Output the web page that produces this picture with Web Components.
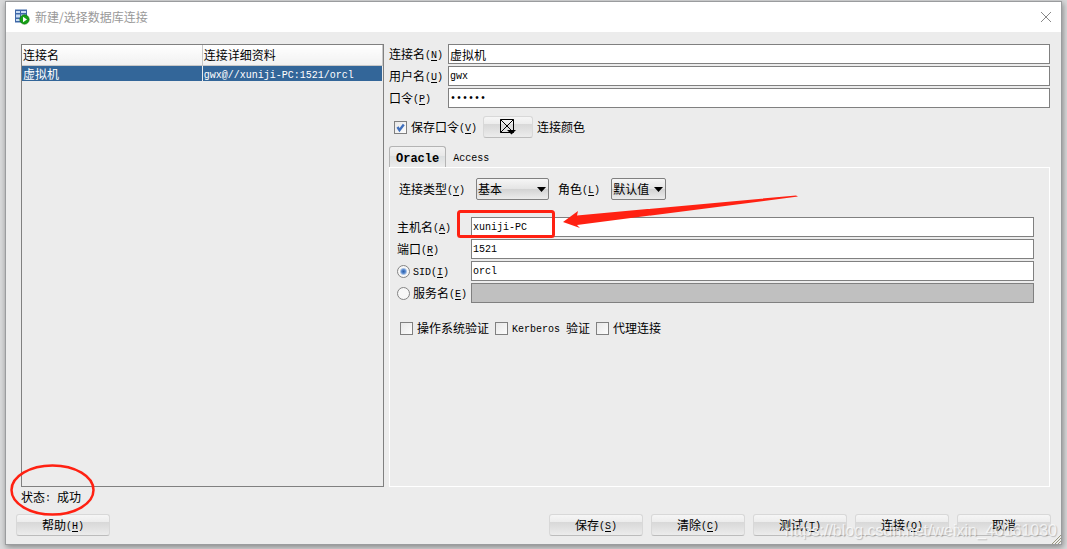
<!DOCTYPE html>
<html lang="zh-CN">
<head>
<meta charset="UTF-8">
<meta name="viewport" content="width=device-width, initial-scale=1">
<title>新建/选择数据库连接</title>
<style>
    body {
        margin: 0;
        background: #d9dadb;
        font-family: "Noto Sans CJK SC", "Liberation Sans", sans-serif;
        font-size: 12px;
        line-height: 16px;
        color: #000;
    }
</style>
</head>
<body>
<db-dialog></db-dialog>

<script>
const MONO = '"Liberation Mono", "Noto Sans CJK SC", monospace';

// Narrow text that sits between the Chinese characters
class LatinText extends HTMLElement {
    constructor() {
        super();
        this.attachShadow({ mode: 'open' });
        this.shadowRoot.innerHTML = `<style>
                :host { font-family: ${MONO}; font-size: 10px; line-height: 1; vertical-align: 1px; }
            </style><slot></slot>`;
    }
}

// Mnemonic such as (N), with the key underlined
class KeyHint extends HTMLElement {
    constructor() {
        super();
        this.attachShadow({ mode: 'open' });
    }

    connectedCallback() {
        this.shadowRoot.innerHTML = `<style>
                :host { font-family: ${MONO}; font-size: 10px; line-height: 1; vertical-align: 1px; }
                u { text-underline-offset: 2px; }
            </style>(<u>${this.getAttribute('key')}</u>)`;
    }
}

class TextField extends HTMLElement {
    constructor() {
        super();
        this.attachShadow({ mode: 'open' });
    }

    connectedCallback() {
        const type = this.getAttribute('type') || 'text';
        const value = this.getAttribute('value') || '';
        const radio = this.hasAttribute('radio');
        const disabled = this.hasAttribute('disabled');
        const checked = this.hasAttribute('checked');

        this.shadowRoot.innerHTML = `
            <style>
                :host { display: flex; align-items: center; }
                label {
                    display: flex;
                    align-items: center;
                    gap: 3px;
                    flex: none;
                    width: var(--label-width, 59px);
                    white-space: nowrap;
                }
                .text {
                    flex: 1;
                    min-width: 0;
                    height: 20px;
                    box-sizing: border-box;
                    padding: 0 1px;
                    border: 1px solid #808080;
                    border-radius: 0;
                    background: #fff;
                    color: #000;
                    font: 10px/16px ${MONO};
                    outline: none;
                }
                :host([wide]) .text { font: 12px/16px "Noto Sans CJK SC", sans-serif; }
                .text:disabled { background: #c0c0c0; }
                .radio {
                    appearance: none;
                    box-sizing: border-box;
                    flex: none;
                    width: 13px;
                    height: 13px;
                    margin: 0;
                    border: 1px solid #848484;
                    border-radius: 50%;
                    background: #f7f7f7;
                }
                .radio:checked {
                    background: radial-gradient(circle, #2c5ea8 0, #5a8bd0 2px, #f7f7f7 4px);
                }
            </style>
            <label for="${radio ? 'radio' : 'text'}">
                ${radio ? `<input id="radio" class="radio" type="radio" ${checked ? 'checked' : ''}>` : ''}
                <span id="caption"><slot></slot></span>
            </label>
            <input id="text" class="text" type="${type}" value="${value}"
                aria-labelledby="caption" ${disabled ? 'disabled' : ''}>
        `;

        if (radio) {
            this.shadowRoot.querySelector('.radio').addEventListener('change', () => {
                this.parentNode.querySelectorAll('text-field[radio]').forEach(field => {
                    const on = field === this;
                    field.shadowRoot.querySelector('.radio').checked = on;
                    field.shadowRoot.querySelector('.text').disabled = !on;
                });
            });
        }
    }
}

class CheckBox extends HTMLElement {
    constructor() {
        super();
        this.attachShadow({ mode: 'open' });
    }

    connectedCallback() {
        const checked = this.hasAttribute('checked');
        this.shadowRoot.innerHTML = `
            <style>
                :host { display: block; }
                label { display: flex; align-items: center; gap: 4px; white-space: nowrap; }
                .box { display: grid; }
                input, svg { grid-area: 1 / 1; width: 13px; height: 13px; margin: 0; }
                input {
                    appearance: none;
                    box-sizing: border-box;
                    border: 1px solid #808080;
                    background: linear-gradient(135deg, #e8e8e8, #fcfcfc);
                }
                svg { pointer-events: none; visibility: hidden; }
                input:checked + svg { visibility: visible; }
            </style>
            <label>
                <span class="box">
                    <input type="checkbox" ${checked ? 'checked' : ''}>
                    <svg viewBox="0 0 13 13" aria-hidden="true">
                        <path d="M3.5 6l2 3.2L9.8 3.6" fill="none" stroke="#3f6fbd" stroke-width="2.4"/>
                    </svg>
                </span>
                <span><slot></slot></span>
            </label>
        `;
    }
}

class DropDown extends HTMLElement {
    constructor() {
        super();
        this.attachShadow({ mode: 'open' });
    }

    connectedCallback() {
        const value = this.getAttribute('value');
        this.shadowRoot.innerHTML = `
            <style>
                :host { display: flex; align-items: center; }
                label { white-space: nowrap; }
                .select { display: grid; align-items: center; width: var(--select-width, 73px); }
                select, svg { grid-area: 1 / 1; }
                select {
                    appearance: none;
                    width: 100%;
                    height: 22px;
                    padding: 0 1px;
                    border: 1px solid #808080;
                    border-radius: 2px;
                    background: linear-gradient(#f6f6f6, #e4e4e4 50%, #d2d2d2 50%, #ececec);
                    color: #000;
                    font: 12px/16px "Noto Sans CJK SC", sans-serif;
                }
                svg { justify-self: end; width: 9px; height: 5px; margin-right: 3px; pointer-events: none; }
            </style>
            <label for="select"><slot></slot></label>
            <span class="select">
                <select id="select"><option>${value}</option></select>
                <svg viewBox="0 0 9 5" aria-hidden="true"><path d="M0 0h9L4.5 5z"/></svg>
            </span>
        `;
    }
}

class PushButton extends HTMLElement {
    constructor() {
        super();
        this.attachShadow({ mode: 'open' });
    }

    connectedCallback() {
        const label = this.getAttribute('label');
        this.shadowRoot.innerHTML = `
            <style>
                :host { display: block; width: 94px; }
                button {
                    display: flex;
                    align-items: center;
                    justify-content: center;
                    width: 100%;
                    height: 22px;
                    padding: 0;
                    border: 1px solid #d8d8d8;
                    border-bottom-color: #bcbcbc;
                    border-radius: 3px;
                    background: linear-gradient(#f6f6f6, #ececec 35%, #d8d8d8 36%, #ececec);
                    color: inherit;
                    font: inherit;
                    white-space: nowrap;
                }
                button:active { background: #d4d4d4; }
            </style>
            <button type="button" ${label ? `aria-label="${label}"` : ''}><span><slot></slot></span></button>
        `;
    }
}

class ConnectionList extends HTMLElement {
    constructor() {
        super();
        this.attachShadow({ mode: 'open' });
        this.shadowRoot.innerHTML = `
            <style>
                :host { display: block; border: 1px solid #808080; }
                table { width: 100%; border-collapse: collapse; table-layout: fixed; }
                th, td { padding: 0 1px; text-align: left; font-weight: normal; white-space: nowrap; overflow: hidden; }
                th {
                    height: 20px;
                    border-right: 1px solid #c8c8c8;
                    border-bottom: 1px solid #c8c8c8;
                    background: linear-gradient(#fff, #f1f1f1);
                }
                td { height: 15px; line-height: 15px; background: #336699; color: #fff; border-right: 1px solid #ececec; }
            </style>
            <table>
                <thead><tr><th>连接名</th><th>连接详细资料</th></tr></thead>
                <tbody><tr><td>虚拟机</td><td><latin-text>gwx@//xuniji-PC:1521/orcl</latin-text></td></tr></tbody>
            </table>
        `;
    }
}

class ConnectionForm extends HTMLElement {
    constructor() {
        super();
        this.attachShadow({ mode: 'open' });
        this.shadowRoot.innerHTML = `
            <style>
                :host { display: flex; flex-direction: column; }
                .fields { display: flex; flex-direction: column; gap: 2px; }
                .row { display: flex; align-items: center; }
                .save { padding: 8px 5px; gap: 4px; }
                .save push-button { width: 50px; margin-left: 2px; }
                .swatch { display: block; width: 16px; height: 18px; }
                .tabs { display: flex; margin-bottom: -1px; }
                .tabs button {
                    height: 22px;
                    padding: 3px 6px 0;
                    border: 1px solid transparent;
                    background: none;
                    color: inherit;
                    font: 10px/16px ${MONO};
                }
                .tabs button[aria-selected="true"] {
                    border-color: #b4b4b4 #b4b4b4 transparent;
                    border-radius: 3px 3px 0 0;
                    background: linear-gradient(#f2f2f2, #e8e8e8 45%, #dcdfe0 46%, #ececec);
                    font-size: 12px;
                    font-weight: bold;
                }
                .panel { flex: 1; padding: 10px 15px 0 7px; border: 1px solid #fff; }
                .kinds { gap: 9px; padding: 0 2px; margin-bottom: 17px; }
                .role { --select-width: 55px; }
                .kinds drop-down { gap: 11px; }
                .panel .fields { --label-width: 74px; }
                .options { gap: 6px; padding: 17px 3px; }
            </style>
            <div class="fields">
                <text-field wide value="虚拟机">连接名<key-hint key="N"></key-hint></text-field>
                <text-field value="gwx">用户名<key-hint key="U"></key-hint></text-field>
                <text-field type="password" value="oracle">口令<key-hint key="P"></key-hint></text-field>
            </div>
            <div class="row save">
                <check-box checked>保存口令<key-hint key="V"></key-hint></check-box>
                <push-button label="连接颜色">
                    <svg class="swatch" viewBox="0 0 16 18" aria-hidden="true">
                        <path d="M.5 1.5h13v13H.5zM.5 1.5l13 13M13.5 1.5l-13 13" fill="none" stroke="#000"/>
                        <path d="M7 12h9l-4.5 4.5z"/>
                    </svg>
                </push-button>
                <span>连接颜色</span>
            </div>
            <div class="tabs" role="tablist">
                <button type="button" role="tab" aria-selected="true">Oracle</button>
                <button type="button" role="tab" aria-selected="false">Access</button>
            </div>
            <div class="panel" role="tabpanel">
                <div class="row kinds">
                    <drop-down value="基本">连接类型<key-hint key="Y"></key-hint></drop-down>
                    <drop-down class="role" value="默认值">角色<key-hint key="L"></key-hint></drop-down>
                </div>
                <div class="fields">
                    <text-field value="xuniji-PC">主机名<key-hint key="A"></key-hint></text-field>
                    <text-field value="1521">端口<key-hint key="R"></key-hint></text-field>
                    <text-field radio checked value="orcl"><latin-text>SID</latin-text><key-hint key="I"></key-hint></text-field>
                    <text-field radio disabled>服务名<key-hint key="E"></key-hint></text-field>
                </div>
                <div class="row options">
                    <check-box>操作系统验证</check-box>
                    <check-box><latin-text>Kerberos </latin-text>验证</check-box>
                    <check-box>代理连接</check-box>
                </div>
            </div>
        `;
    }
}

// Red marks and the watermark drawn over the dialog
class MarkLayer extends HTMLElement {
    constructor() {
        super();
        this.attachShadow({ mode: 'open' });
        this.shadowRoot.innerHTML = `
            <style>
                :host { position: absolute; inset: 0; overflow: hidden; pointer-events: none; }
                svg { display: block; width: 1067px; height: 549px; }
                span {
                    position: absolute;
                    right: 10px;
                    bottom: 9px;
                    font-family: "Liberation Sans", sans-serif;
                    font-size: 16px;
                    line-height: 18px;
                    color: rgba(255, 255, 255, 0.7);
                    text-shadow: 1px 1px 1px rgba(0, 0, 0, 0.2);
                }
            </style>
            <svg viewBox="0 0 1067 549" aria-hidden="true">
                <g fill="none" stroke="#ff2112" stroke-width="3">
                    <rect x="458.5" y="211.5" width="95" height="25" rx="2"/>
                    <ellipse cx="52.5" cy="490" rx="41" ry="24.5" stroke-width="2.5"/>
                </g>
                <path d="M563 222l15-11-1 4.500L796 195.500l2 1L577 225l3 3z" fill="#ff2112"/>
            </svg>
            <span>https://blog.csdn.net/weixin_40161030</span>
        `;
    }
}

class DbDialog extends HTMLElement {
    constructor() {
        super();
        this.attachShadow({ mode: 'open' });
        this.shadowRoot.innerHTML = `
            <style>
                :host {
                    display: flex;
                    position: relative;
                    box-sizing: border-box;
                    min-height: 100vh;
                    padding: 1px 5px 4px;
                    overflow: hidden;
                }
                .window {
                    flex: 1;
                    display: flex;
                    flex-direction: column;
                    min-width: 0;
                    border: 1px solid #9a9c9e;
                    background: #ececec;
                    box-shadow: 1px 2px 6px rgba(0, 0, 0, 0.4);
                }
                header { display: flex; align-items: center; gap: 5px; height: 30px; padding: 0 9px 0 8px; background: #fff; }
                h1 { flex: 1; margin: 0; font-size: 12px; font-weight: normal; color: #999; }
                header svg { width: 16px; height: 16px; }
                .close { display: flex; padding: 0; border: 0; background: none; }
                .close svg { width: 12px; height: 12px; }
                main { flex: 1; display: flex; gap: 5px; padding: 12px 11px 0 15px; }
                connection-list { flex: 0 1 361px; }
                connection-form { flex: 1; min-width: 0; }
                .status { padding: 2px 15px 0; }
                footer { display: flex; align-items: center; gap: 8px; padding: 9px 10px 8px; }
                footer push-button:first-child { margin-right: auto; }
                .grip { position: absolute; right: 6px; bottom: 5px; width: 9px; height: 9px; }
            </style>
            <div class="window" role="dialog" aria-labelledby="title">
                <header>
                    <svg viewBox="0 0 16 16" aria-hidden="true">
                        <path d="M1 .5h12v13H1z" fill="#3f68a8"/>
                        <path d="M2 2h4v2H2zM7 2h5v2H7zM2 5.500h4v3H2zM7 5.500h5v3H7zM2 10h4v2H2z" fill="#c8dcf4"/>
                        <circle cx="10.500" cy="10.500" r="4.700" fill="#16a016" stroke="#087008" stroke-width=".6"/>
                        <path d="M9 7.800v5.400l4-2.700z" fill="#fff"/>
                    </svg>
                    <h1 id="title">新建/选择数据库连接</h1>
                    <button class="close" type="button" aria-label="关闭">
                        <svg viewBox="0 0 12 12"><path d="M1 1l10 10M11 1L1 11" fill="none" stroke="#888"/></svg>
                    </button>
                </header>
                <main>
                    <connection-list></connection-list>
                    <connection-form></connection-form>
                </main>
                <div class="status">状态<latin-text>: </latin-text>成功</div>
                <footer>
                    <push-button>帮助<key-hint key="H"></key-hint></push-button>
                    <push-button>保存<key-hint key="S"></key-hint></push-button>
                    <push-button>清除<key-hint key="C"></key-hint></push-button>
                    <push-button>测试<key-hint key="T"></key-hint></push-button>
                    <push-button>连接<key-hint key="O"></key-hint></push-button>
                    <push-button>取消</push-button>
                </footer>
            </div>
            <svg class="grip" viewBox="0 0 9 9" aria-hidden="true">
                <path d="M0 9l9-9M3 9l6-6M6 9l3-3" stroke="#9a9880"/>
            </svg>
            <mark-layer></mark-layer>
        `;
    }
}

customElements.define('latin-text', LatinText);
customElements.define('key-hint', KeyHint);
customElements.define('text-field', TextField);
customElements.define('check-box', CheckBox);
customElements.define('drop-down', DropDown);
customElements.define('push-button', PushButton);
customElements.define('connection-list', ConnectionList);
customElements.define('connection-form', ConnectionForm);
customElements.define('mark-layer', MarkLayer);
customElements.define('db-dialog', DbDialog);
</script>
</body>
</html>
